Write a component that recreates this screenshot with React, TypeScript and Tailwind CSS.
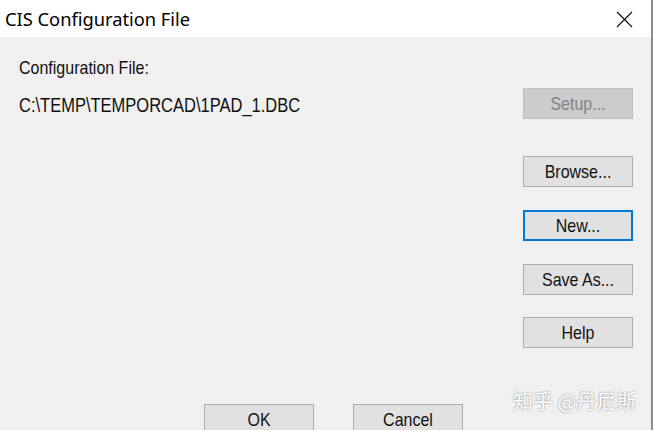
import React from "react";

const SANS = '"Liberation Sans", Arial, sans-serif';

const Tall = ({ children }: { children: React.ReactNode }) => (
  <span className="inline-block scale-y-[1.2] origin-center">{children}</span>
);

const Btn = ({
  label,
  variant = "normal",
  className = "",
}: {
  label: string;
  variant?: "normal" | "disabled" | "focus";
  className?: string;
}) => {
  const base =
    "w-[110px] h-[31px] flex items-center justify-center text-[16px] leading-none";
  const v =
    variant === "disabled"
      ? "bg-[#cccccc] border border-[#bfbfbf] text-[#838383]"
      : variant === "focus"
      ? "bg-[#e1e1e1] border-2 border-[#0078d7] text-[#111]"
      : "bg-[#e1e1e1] border border-[#adadad] text-[#111]";
  return (
    <div className={`${base} ${v} ${className}`}>
      <Tall>{label}</Tall>
    </div>
  );
};

export default function App() {
  return (
    <div
      className="relative w-[653px] h-[430px] overflow-hidden bg-[#f0f0f0] border-r-2 border-[#8c8c8c]"
      style={{ fontFamily: SANS }}
    >
      <div className="h-[37px] bg-white flex items-center justify-between pl-[5px] pr-[18px]">
        <span
          className="text-[18.3px] text-black"
          style={{ fontFamily: '"Noto Sans", "Open Sans", sans-serif' }}
        >
          CIS Configuration File
        </span>
        <svg width="17" height="17" viewBox="0 0 17 17" className="mt-[1px]">
          <path d="M1 1 L16 16 M16 1 L1 16" stroke="#111" strokeWidth="1.2" />
        </svg>
      </div>
      <div className="flex">
        <div className="flex-1 pl-[19px] pt-[21px] text-[16px] text-[#111]">
          <div className="leading-[20px]">
            <Tall>Configuration File:</Tall>
          </div>
          <div className="leading-[20px] mt-[17px] text-[16.5px]">
            <Tall>C:\TEMP\TEMPORCAD\1PAD_1.DBC</Tall>
          </div>
        </div>
        <div className="w-[110px] mr-[18px] pt-[51px] flex flex-col">
          <Btn label="Setup..." variant="disabled" />
          <Btn label="Browse..." className="mt-[37px]" />
          <Btn label="New..." variant="focus" className="mt-[23px]" />
          <Btn label="Save As..." className="mt-[23px]" />
          <Btn label="Help" className="mt-[22px]" />
        </div>
      </div>
      <div className="flex pl-[204px] gap-[39px] mt-[56px]">
        <Btn label="OK" />
        <Btn label="Cancel" />
      </div>
      <div
        className="absolute left-[513px] top-[386px] text-[20px] text-white [text-shadow:0_0_2px_rgba(0,0,0,0.5)]"
        style={{ fontFamily: '"Noto Sans CJK SC", sans-serif' }}
      >
        知乎 @丹尼斯
      </div>
    </div>
  );
}
